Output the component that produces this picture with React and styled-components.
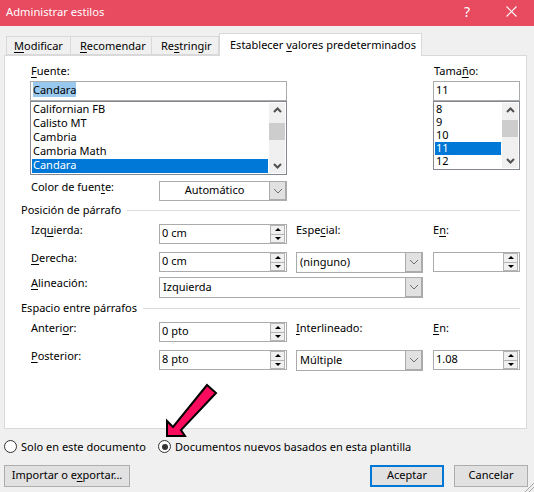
import React from "react";
import styled, { createGlobalStyle } from "styled-components";

const GlobalStyle = createGlobalStyle`
  html, body {
    margin: 0;
    padding: 0;
    background: #f0f0f0;
  }
  * {
    box-sizing: border-box;
  }
  u {
    text-underline-offset: 2px;
    text-decoration-thickness: 1px;
  }
`;

const fontFamilies = ["Californian FB", "Calisto MT", "Cambria", "Cambria Math", "Candara"];
const fontSizes = ["8", "9", "10", "11", "12"];

const UpChevron = () => (
  <svg width="9" height="6" viewBox="0 0 9 6">
    <path d="M1 5 L4.5 1.5 L8 5" fill="none" stroke="#505050" strokeWidth="2" />
  </svg>
);

const DownChevron = () => (
  <svg width="9" height="6" viewBox="0 0 9 6">
    <path d="M1 1 L4.5 4.5 L8 1" fill="none" stroke="#505050" strokeWidth="2" />
  </svg>
);

const Scroll = ({ top, thumb }) => (
  <ScrollTrack>
    <ScrollEnd>
      <UpChevron />
    </ScrollEnd>
    <ScrollThumb $top={top} $height={thumb} />
    <ScrollEnd>
      <DownChevron />
    </ScrollEnd>
  </ScrollTrack>
);

const Spinner = () => (
  <SpinBox>
    <SpinButton>
      <svg width="6" height="3" viewBox="0 0 6 3">
        <path d="M3 0 L6 3 L0 3 Z" fill="#000" />
      </svg>
    </SpinButton>
    <SpinButton>
      <svg width="6" height="3" viewBox="0 0 6 3">
        <path d="M0 0 L6 0 L3 3 Z" fill="#000" />
      </svg>
    </SpinButton>
  </SpinBox>
);

const NumberField = ({ value, width = 128 }) => (
  <InputBox $width={width}>
    <InputText>{value}</InputText>
    <Spinner />
  </InputBox>
);

const Combo = ({ value, width = 127, centered }) => (
  <ComboBox $width={width}>
    <ComboText $centered={centered}>{value}</ComboText>
    <ComboArrow>
      <svg width="10" height="6" viewBox="0 0 10 6">
        <path d="M1 1 L5 5 L9 1" fill="none" stroke="#707070" strokeWidth="1" />
      </svg>
    </ComboArrow>
  </ComboBox>
);

export default function App() {
  return (
    <>
      <GlobalStyle />
      <Dialog>
        <TitleBar>
          <Title>Administrar estilos</Title>
          <HelpGlyph>?</HelpGlyph>
          <CloseGlyph>
            <svg width="11" height="11" viewBox="0 0 11 11">
              <path d="M0.5 0.5 L10.5 10.5 M10.5 0.5 L0.5 10.5" stroke="#fff" strokeWidth="1.1" />
            </svg>
          </CloseGlyph>
        </TitleBar>

        <Body>
          <TabStrip>
            <Tab $width={65}>
              <u>M</u>odificar
            </Tab>
            <Tab $width={81}>
              <u>R</u>ecomendar
            </Tab>
            <Tab $width={67}>
              Re<u>s</u>tringir
            </Tab>
            <Tab $width={203} $active>
              Establecer <u>v</u>alores predeterminados
            </Tab>
          </TabStrip>

          <Panel>
            <FontBlock>
              <FontColumn>
                <FieldLabel>
                  <u>F</u>uente:
                </FieldLabel>
                <PlainInput>
                  <Selected>Candara</Selected>
                </PlainInput>
                <ListBox $height={74}>
                  <ListRows>
                    {fontFamilies.map((name) => (
                      <ListRow key={name} $height={14} $line={11} $selected={name === "Candara"}>
                        {name}
                      </ListRow>
                    ))}
                  </ListRows>
                  <Scroll top={14} thumb={17} />
                </ListBox>
              </FontColumn>
              <SizeColumn>
                <FieldLabel>
                  Tama<u>ñ</u>o:
                </FieldLabel>
                <PlainInput>11</PlainInput>
                <ListBox $height={69}>
                  <ListRows>
                    {fontSizes.map((size) => (
                      <ListRow key={size} $height={13} $line={12} $selected={size === "11"}>
                        {size}
                      </ListRow>
                    ))}
                  </ListRows>
                  <Scroll top={11} thumb={17} />
                </ListBox>
              </SizeColumn>
            </FontBlock>

            <FormRow $top={6}>
              <Label>
                Color de fuen<u>t</u>e:
              </Label>
              <Combo value="Automático" width={128} centered />
            </FormRow>

            <SectionHeading $top={3}>
              <span>Posición de párrafo</span>
              <Rule />
            </SectionHeading>

            <FormRow $top={6}>
              <Label>
                Izq<u>u</u>ierda:
              </Label>
              <NumberField value="0 cm" />
              <Label>
                Espe<u>c</u>ial:
              </Label>
              <Label>
                E<u>n</u>:
              </Label>
            </FormRow>

            <FormRow $top={8}>
              <Label>
                <u>D</u>erecha:
              </Label>
              <NumberField value="0 cm" />
              <Combo value="(ninguno)" />
              <NumberField value="" width={87} />
            </FormRow>

            <FormRow $top={4}>
              <Label>
                <u>A</u>lineación:
              </Label>
              <WideCell>
                <Combo value="Izquierda" width={264} />
              </WideCell>
            </FormRow>

            <SectionHeading $top={4}>
              <span>Espacio entre párrafos</span>
              <Rule />
            </SectionHeading>

            <FormRow $top={6}>
              <Label>
                Anteri<u>o</u>r:
              </Label>
              <NumberField value="0 pto" />
              <Label>
                <u>I</u>nterlineado:
              </Label>
              <Label>
                <u>E</u>n:
              </Label>
            </FormRow>

            <FormRow $top={8}>
              <Label>
                <u>P</u>osterior:
              </Label>
              <NumberField value="8 pto" />
              <Combo value="Múltiple" />
              <NumberField value="1.08" width={87} />
            </FormRow>
          </Panel>

          <RadioRow>
            <RadioOption $width={154}>
              <RadioMark />
              Solo en este documento
            </RadioOption>
            <RadioOption>
              <RadioMark $checked />
              Documentos nuevos basados en esta plantilla
            </RadioOption>
          </RadioRow>

          <ButtonRow>
            <DialogButton $width={126}>
              Importar o e<u>x</u>portar...
            </DialogButton>
            <ButtonGroup>
              <DialogButton $width={74} $primary>
                Aceptar
              </DialogButton>
              <DialogButton $width={74}>Cancelar</DialogButton>
            </ButtonGroup>
          </ButtonRow>
        </Body>

        <Pointer viewBox="0 0 60 64" width="60" height="64">
          <path
            d="M7 58 L7 43 L13 49 L47 7 L56 15 L21 52 L25 58 Z"
            fill="#fa0b5e"
            stroke="#000"
            strokeWidth="2"
          />
        </Pointer>
        <ResizeGrip viewBox="0 0 10 10" width="10" height="10">
          <path d="M10 1 L1 10 M10 5 L5 10" stroke="#a8a8a8" strokeWidth="1" />
        </ResizeGrip>
      </Dialog>
    </>
  );
}

const Dialog = styled.div`
  position: relative;
  display: flex;
  flex-direction: column;
  width: 534px;
  height: 492px;
  overflow: hidden;
  background: #f0f0f0;
  color: #000;
  font-family: "Noto Sans", "Open Sans", sans-serif;
  font-size: 11px;
`;

const TitleBar = styled.div`
  display: flex;
  align-items: center;
  flex: 0 0 26px;
  padding: 0 17px 4px 6px;
  background: #e84a5f;
  color: #fff;
`;

const Title = styled.div`
  flex: 1;
  font-size: 11.2px;
`;

const HelpGlyph = styled.div`
  margin-right: 36px;
  font-size: 14px;
`;

const CloseGlyph = styled.div`
  display: flex;
`;

const Body = styled.div`
  display: flex;
  flex: 1;
  flex-direction: column;
  min-height: 0;
  padding: 7px 6px 5px 4px;
`;

const TabStrip = styled.div`
  display: flex;
  flex: 0 0 21px;
  align-items: flex-end;
  padding-left: 2px;
`;

const Tab = styled.div`
  position: relative;
  z-index: ${(p) => (p.$active ? 1 : 0)};
  width: ${(p) => p.$width}px;
  height: ${(p) => (p.$active ? 23 : 19)}px;
  margin-bottom: ${(p) => (p.$active ? -1 : 0)}px;
  padding-left: ${(p) => (p.$active ? 10 : 9)}px;
  border: 1px solid #d9d9d9;
  border-bottom: ${(p) => (p.$active ? "0" : "1px solid #d9d9d9")};
  border-left: ${(p) => (p.$active ? "1px solid #d9d9d9" : "0")};
  background: ${(p) => (p.$active ? "#fff" : "#f0f0f0")};
  line-height: ${(p) => (p.$active ? 21 : 17)}px;
  white-space: nowrap;

  &:first-child {
    border-left: 1px solid #d9d9d9;
    padding-left: 7px;
  }
`;

const Panel = styled.div`
  flex: 1;
  min-height: 0;
  margin-right: 1px;
  padding: 8px 6px 0 16px;
  border: 1px solid #d9d9d9;
  background: #fff;
`;

const FontBlock = styled.div`
  display: flex;
  justify-content: space-between;
  margin-left: 9px;
`;

const FontColumn = styled.div`
  width: 257px;
`;

const SizeColumn = styled.div`
  width: 87px;
`;

const FieldLabel = styled.div`
  height: 17px;
  padding-left: 1px;
  line-height: 13px;
`;

const PlainInput = styled.div`
  height: 20px;
  padding-left: 2px;
  border: 1px solid #ababab;
  line-height: 15px;
`;

const Selected = styled.span`
  background: #99c9ef;
`;

const ListBox = styled.div`
  display: flex;
  gap: 1px;
  height: ${(p) => p.$height}px;
  padding: 1px;
  border: 1px solid #828790;
`;

const ListRows = styled.div`
  flex: 1;
  min-width: 0;
`;

const ListRow = styled.div`
  height: ${(p) => p.$height}px;
  padding-left: 1px;
  background: ${(p) => (p.$selected ? "#0078d7" : "transparent")};
  color: ${(p) => (p.$selected ? "#fff" : "#000")};
  line-height: ${(p) => p.$line}px;
  white-space: nowrap;
`;

const ScrollTrack = styled.div`
  position: relative;
  flex: 0 0 16px;
  display: flex;
  flex-direction: column;
  justify-content: space-between;
  background: #f0f0f0;
`;

const ScrollEnd = styled.div`
  display: flex;
  align-items: center;
  justify-content: center;
  height: 14px;
`;

const ScrollThumb = styled.div`
  position: absolute;
  top: ${(p) => p.$top + 6}px;
  left: 0;
  right: 0;
  height: ${(p) => p.$height}px;
  background: #cdcdcd;
`;

const FormRow = styled.div`
  display: grid;
  grid-template-columns: 128px 137px 137px 87px;
  align-items: start;
  margin: ${(p) => p.$top}px 0 0 10px;
`;

const Label = styled.div`
  line-height: 11px;
  white-space: nowrap;
`;

const WideCell = styled.div`
  grid-column: 2 / 4;
`;

const SectionHeading = styled.div`
  display: flex;
  align-items: center;
  gap: 6px;
  height: 14px;
  margin-top: ${(p) => p.$top}px;
  padding-bottom: 2px;
  line-height: 12px;
  white-space: nowrap;
`;

const Rule = styled.div`
  flex: 1;
  height: 1px;
  background: #dcdcdc;
`;

const InputBox = styled.div`
  display: flex;
  align-items: stretch;
  width: ${(p) => p.$width}px;
  height: 20px;
  border: 1px solid #ababab;
  background: #fff;
`;

const InputText = styled.div`
  flex: 1;
  padding-left: 2px;
  line-height: 15px;
`;

const SpinBox = styled.div`
  display: flex;
  flex: 0 0 15px;
  flex-direction: column;
  margin-right: 1px;
`;

const SpinButton = styled.div`
  display: flex;
  flex: 1;
  align-items: center;
  justify-content: center;
  border: 1px solid #b4b4b4;
  background: #f0f0f0;

  & + & {
    border-top: 0;
  }
`;

const ComboBox = styled.div`
  display: flex;
  width: ${(p) => p.$width}px;
  height: ${(p) => (p.$width === 128 ? 20 : 21)}px;
  border: 1px solid #ababab;
  background: #fff;
`;

const ComboText = styled.div`
  flex: 1;
  padding-left: ${(p) => (p.$centered ? 0 : 3)}px;
  text-align: ${(p) => (p.$centered ? "center" : "left")};
  line-height: ${(p) => (p.$centered ? 15 : 18)}px;
`;

const ComboArrow = styled.div`
  display: flex;
  flex: 0 0 17px;
  align-items: center;
  justify-content: center;
  border-left: 1px solid #ababab;
  border-right: 1px solid #ababab;
  border-bottom: 1px solid #ababab;
  background: #e1e1e1;
`;

const RadioRow = styled.div`
  display: flex;
  flex: 0 0 13px;
  margin-top: 11px;
`;

const RadioOption = styled.div`
  display: flex;
  align-items: center;
  gap: 4px;
  width: ${(p) => (p.$width ? `${p.$width}px` : "auto")};
  height: 13px;
  line-height: 10px;
  white-space: nowrap;
`;

const RadioMark = styled.span`
  display: flex;
  align-items: center;
  justify-content: center;
  flex: 0 0 13px;
  height: 13px;
  border: 1px solid #333;
  border-radius: 50%;
  background: #fff;

  &::after {
    content: "";
    display: ${(p) => (p.$checked ? "block" : "none")};
    width: 6px;
    height: 6px;
    border-radius: 50%;
    background: #333;
  }
`;

const ButtonRow = styled.div`
  display: flex;
  justify-content: space-between;
  margin-top: 12px;
`;

const ButtonGroup = styled.div`
  display: flex;
  gap: 10px;
`;

const DialogButton = styled.div`
  width: ${(p) => p.$width}px;
  height: 22px;
  border: ${(p) => (p.$primary ? "2px solid #0078d7" : "1px solid #adadad")};
  background: #e1e1e1;
  line-height: ${(p) => (p.$primary ? 15 : 17)}px;
  text-align: center;
  white-space: nowrap;
`;

const Pointer = styled.svg`
  position: absolute;
  left: 160px;
  top: 378px;
`;

const ResizeGrip = styled.svg`
  position: absolute;
  right: 0;
  bottom: 0;
`;
